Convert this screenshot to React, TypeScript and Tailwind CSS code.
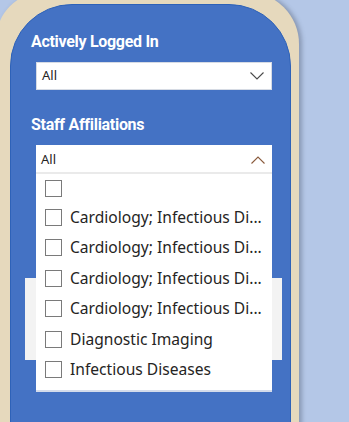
const items = [
    '',
    'Cardiology; Infectious Di...',
    'Cardiology; Infectious Di...',
    'Cardiology; Infectious Di...',
    'Cardiology; Infectious Di...',
    'Diagnostic Imaging',
    'Infectious Diseases',
]

const titleFont = { fontFamily: 'Roboto, "Noto Sans", sans-serif' }

function Chevron({ up, color }: { up?: boolean; color: string }) {
    return (
        <svg width="14" height="8" viewBox="0 0 14 8" fill="none">
            <polyline
                points={up ? '0.5,7.5 7,1 13.5,7.5' : '0.5,0.5 7,7 13.5,0.5'}
                stroke={color}
                strokeWidth="1.1"
            />
        </svg>
    )
}

export default function App() {
    return (
        <div className="w-[349px] h-[422px] overflow-hidden bg-[#b4c7e7]" style={{ fontFamily: '"Noto Sans", "Open Sans", sans-serif' }}>
            <div className="w-[303px] h-[440px] -mt-[8px] -ml-[4px] pl-[4px] pt-[8px] bg-[#e6d9bd] rounded-tl-[48px] rounded-tr-[52px] shadow-[3px_0_4px_rgba(60,70,90,0.35)]">
                <div className="ml-[10px] mt-[4px] w-[281px] h-[440px] bg-[#4472c4] border border-[#2e62b8] rounded-t-[62px]">
                    <div className="pl-[20px] pt-[25px] text-white text-[16px] font-bold leading-[24px] tracking-[-0.3px]" style={titleFont}>
                        Actively Logged In
                    </div>
                    <div className="ml-[25px] mt-[8px] w-[236px] h-[28px] bg-white border border-[#d6dbe4] flex items-center justify-between pl-[5px] pr-[7px]">
                        <span className="text-[13px] text-[#252423]">All</span>
                        <Chevron color="#4a4a4a" />
                    </div>
                    <div className="pl-[20px] pt-[23px] text-white text-[16px] font-bold leading-[24px] tracking-[-0.3px]" style={titleFont}>
                        Staff Affiliations
                    </div>
                    <div className="relative ml-[25px] mt-[8px] w-[236px]">
                        <div className="h-[29px] bg-white border-b-[2px] border-[#eaeaea] flex items-center justify-between pl-[5px] pr-[7px] pt-[2px]">
                            <span className="text-[13px] text-[#252423]">All</span>
                            <Chevron up color="#8a5a3c" />
                        </div>
                        <div className="absolute left-0 top-[29px] w-[236px] h-[218px] bg-white border-b-[2px] border-[#d4dceb] z-10">
                            {items.map((label, i) => (
                                <div key={i} className={`flex items-center gap-[8px] pl-[9px] ${i === 0 ? 'h-[28px]' : 'h-[30.5px]'}`}>
                                    <span className="w-[17px] h-[17px] shrink-0 border border-[#7a7a7a] bg-white" />
                                    <span className="text-[15.6px] text-[#252423] whitespace-nowrap">{label}</span>
                                </div>
                            ))}
                        </div>
                    </div>
                    <div className="ml-[14px] mt-[104px] w-[257px] h-[82px] bg-[#f3f3f3]" />
                </div>
            </div>
        </div>
    )
}
